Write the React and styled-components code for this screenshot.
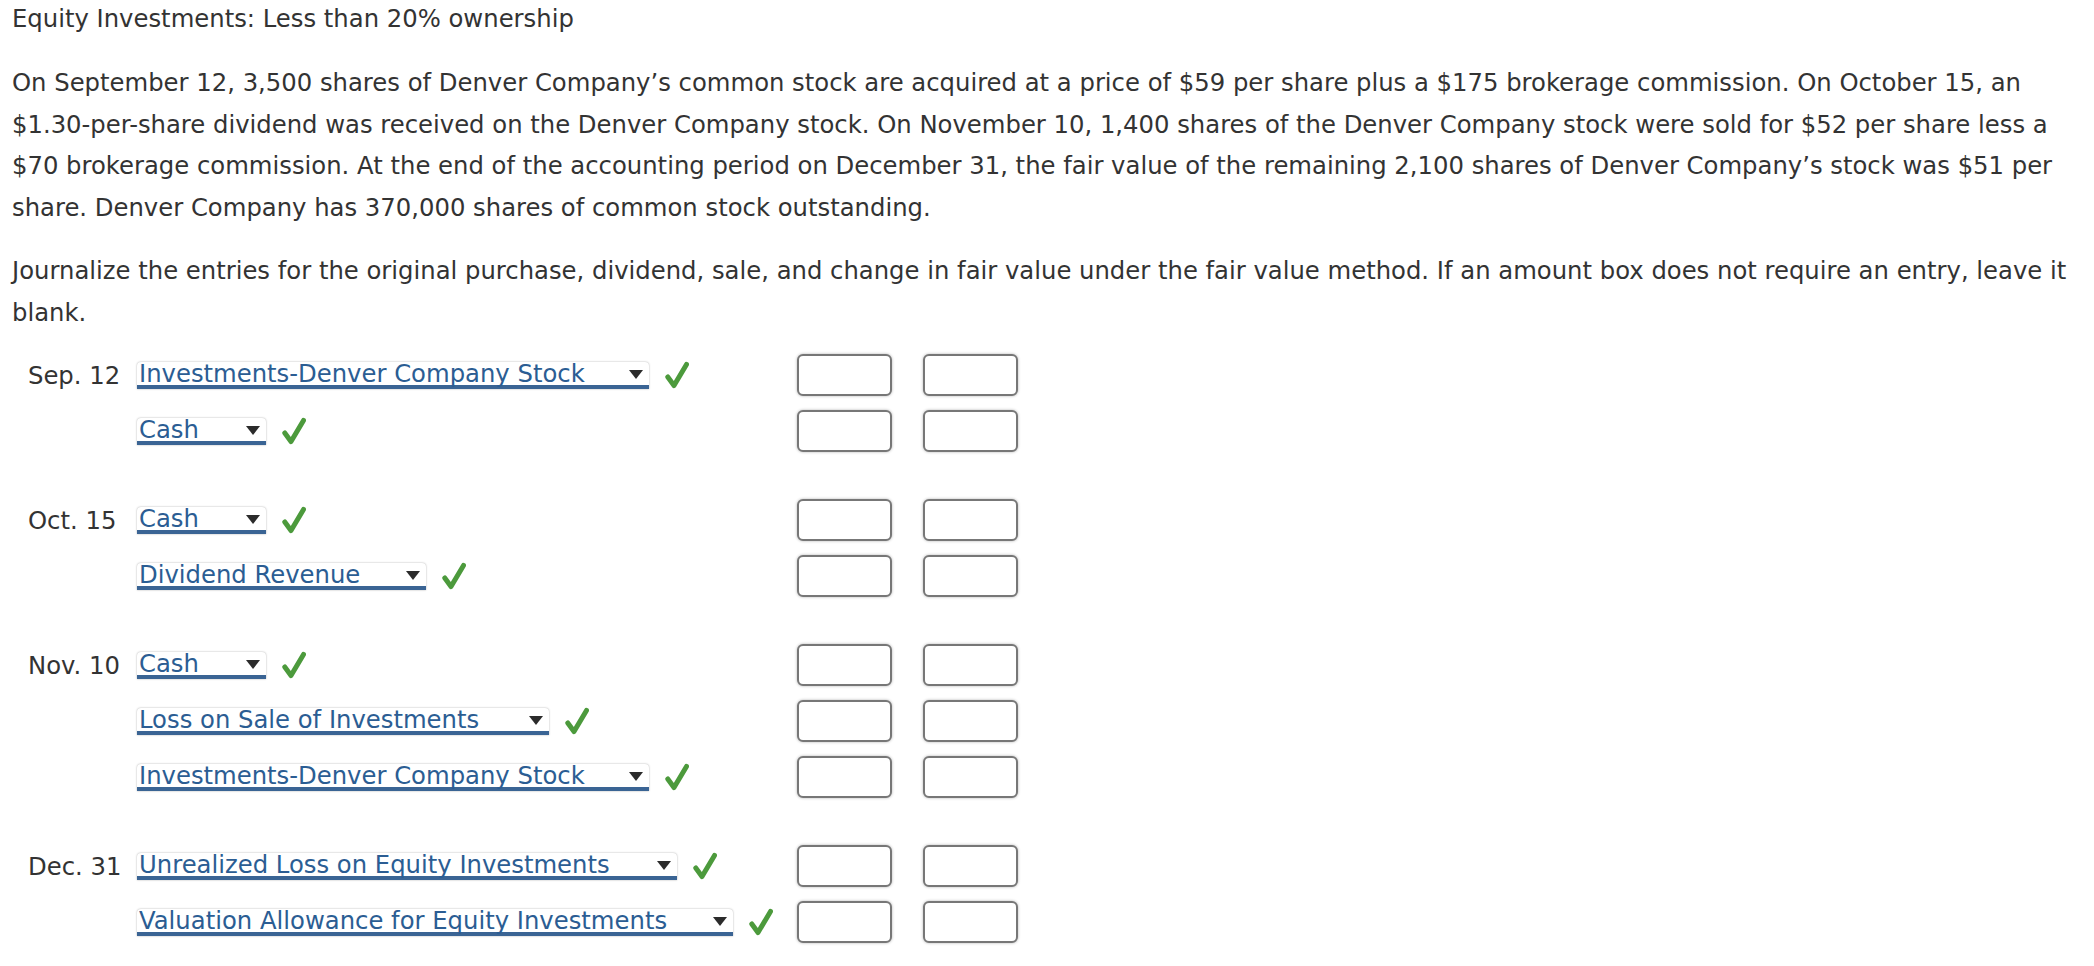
import React from "react";
import styled, { createGlobalStyle } from "styled-components";

const GlobalStyle = createGlobalStyle`
  body {
    margin: 0;
    background: #fff;
    font-family: "DejaVu Sans", Verdana, sans-serif;
    color: #333;
  }
`;

const entries = [
  {
    date: "Sep. 12",
    lines: [
      { account: "Investments-Denver Company Stock", width: 512 },
      { account: "Cash", width: 129 },
    ],
  },
  {
    date: "Oct. 15",
    lines: [
      { account: "Cash", width: 129 },
      { account: "Dividend Revenue", width: 289 },
    ],
  },
  {
    date: "Nov. 10",
    lines: [
      { account: "Cash", width: 129 },
      { account: "Loss on Sale of Investments", width: 412 },
      { account: "Investments-Denver Company Stock", width: 512 },
    ],
  },
  {
    date: "Dec. 31",
    lines: [
      { account: "Unrealized Loss on Equity Investments", width: 540 },
      { account: "Valuation Allowance for Equity Investments", width: 596 },
    ],
  },
];

const Check = () => (
  <CheckIcon viewBox="0 0 24 28" width="24" height="28">
    <path
      d="M2.8 16 L9 24.5 L21.5 3.5"
      fill="none"
      stroke="#4c9a3c"
      strokeWidth="5"
      strokeLinejoin="round"
      strokeLinecap="round"
    />
  </CheckIcon>
);

const App = () => {
  return (
    <Page>
      <GlobalStyle />
      <Title>Equity Investments: Less than 20% ownership</Title>
      <Text>
        On September 12, 3,500 shares of Denver Company’s common stock are
        acquired at a price of $59 per share plus a $175 brokerage commission.
        On October 15, an $1.30-per-share dividend was received on the Denver
        Company stock. On November 10, 1,400 shares of the Denver Company stock
        were sold for $52 per share less a $70 brokerage commission. At the end
        of the accounting period on December 31, the fair value of the
        remaining 2,100 shares of Denver Company’s stock was $51 per share.
        Denver Company has 370,000 shares of common stock outstanding.
      </Text>
      <Text>
        Journalize the entries for the original purchase, dividend, sale, and
        change in fair value under the fair value method. If an amount box does
        not require an entry, leave it blank.
      </Text>
      <Journal>
        {entries.map((entry) => (
          <Group key={entry.date}>
            {entry.lines.map((line, i) => (
              <Row key={i}>
                <DateLabel>{i === 0 ? entry.date : ""}</DateLabel>
                <AccountCell>
                  <Select $width={line.width}>
                    <span>{line.account}</span>
                    <Arrow />
                  </Select>
                  <Check />
                </AccountCell>
                <Amount />
                <Amount />
              </Row>
            ))}
          </Group>
        ))}
      </Journal>
    </Page>
  );
};

const Page = styled.div`
  padding: 0 24px 40px 12px;
  font-size: 24.3px;
`;

const Title = styled.div`
  line-height: 38px;
  margin-bottom: 24px;
`;

const Text = styled.p`
  margin: 21px 0;
  line-height: 41.7px;
`;

const Journal = styled.div`
  margin-top: 20px;
  display: flex;
  flex-direction: column;
  gap: 47px;
`;

const Group = styled.div`
  display: flex;
  flex-direction: column;
  gap: 14px;
`;

const Row = styled.div`
  display: grid;
  grid-template-columns: 109px 660px 126px 95px;
  align-items: center;
  height: 42px;
  padding-left: 16px;
`;

const DateLabel = styled.div`
  white-space: nowrap;
`;

const AccountCell = styled.div`
  display: flex;
  align-items: center;
  gap: 16px;
`;

const Select = styled.div`
  box-sizing: border-box;
  width: ${(p) => p.$width}px;
  height: 27px;
  display: flex;
  align-items: center;
  justify-content: space-between;
  padding: 0 6px 0 2px;
  background: #fff;
  color: #2b5d93;
  border-radius: 4px 4px 0 0;
  border-bottom: 4px solid #3a6494;
  box-shadow: 0 0 2px rgba(0, 0, 0, 0.35);
  white-space: nowrap;
  line-height: 23px;
`;

const Arrow = styled.span`
  width: 0;
  height: 0;
  border-left: 7px solid transparent;
  border-right: 7px solid transparent;
  border-top: 9px solid #2b2b2b;
  margin-top: 2px;
`;

const CheckIcon = styled.svg`
  display: block;
  flex: 0 0 auto;
`;

const Amount = styled.div`
  box-sizing: border-box;
  width: 95px;
  height: 42px;
  border: 2px solid #777;
  border-radius: 6px;
  background: #fff;
  box-shadow: 0 0 3px rgba(0, 0, 0, 0.3);
`;

export default App;
